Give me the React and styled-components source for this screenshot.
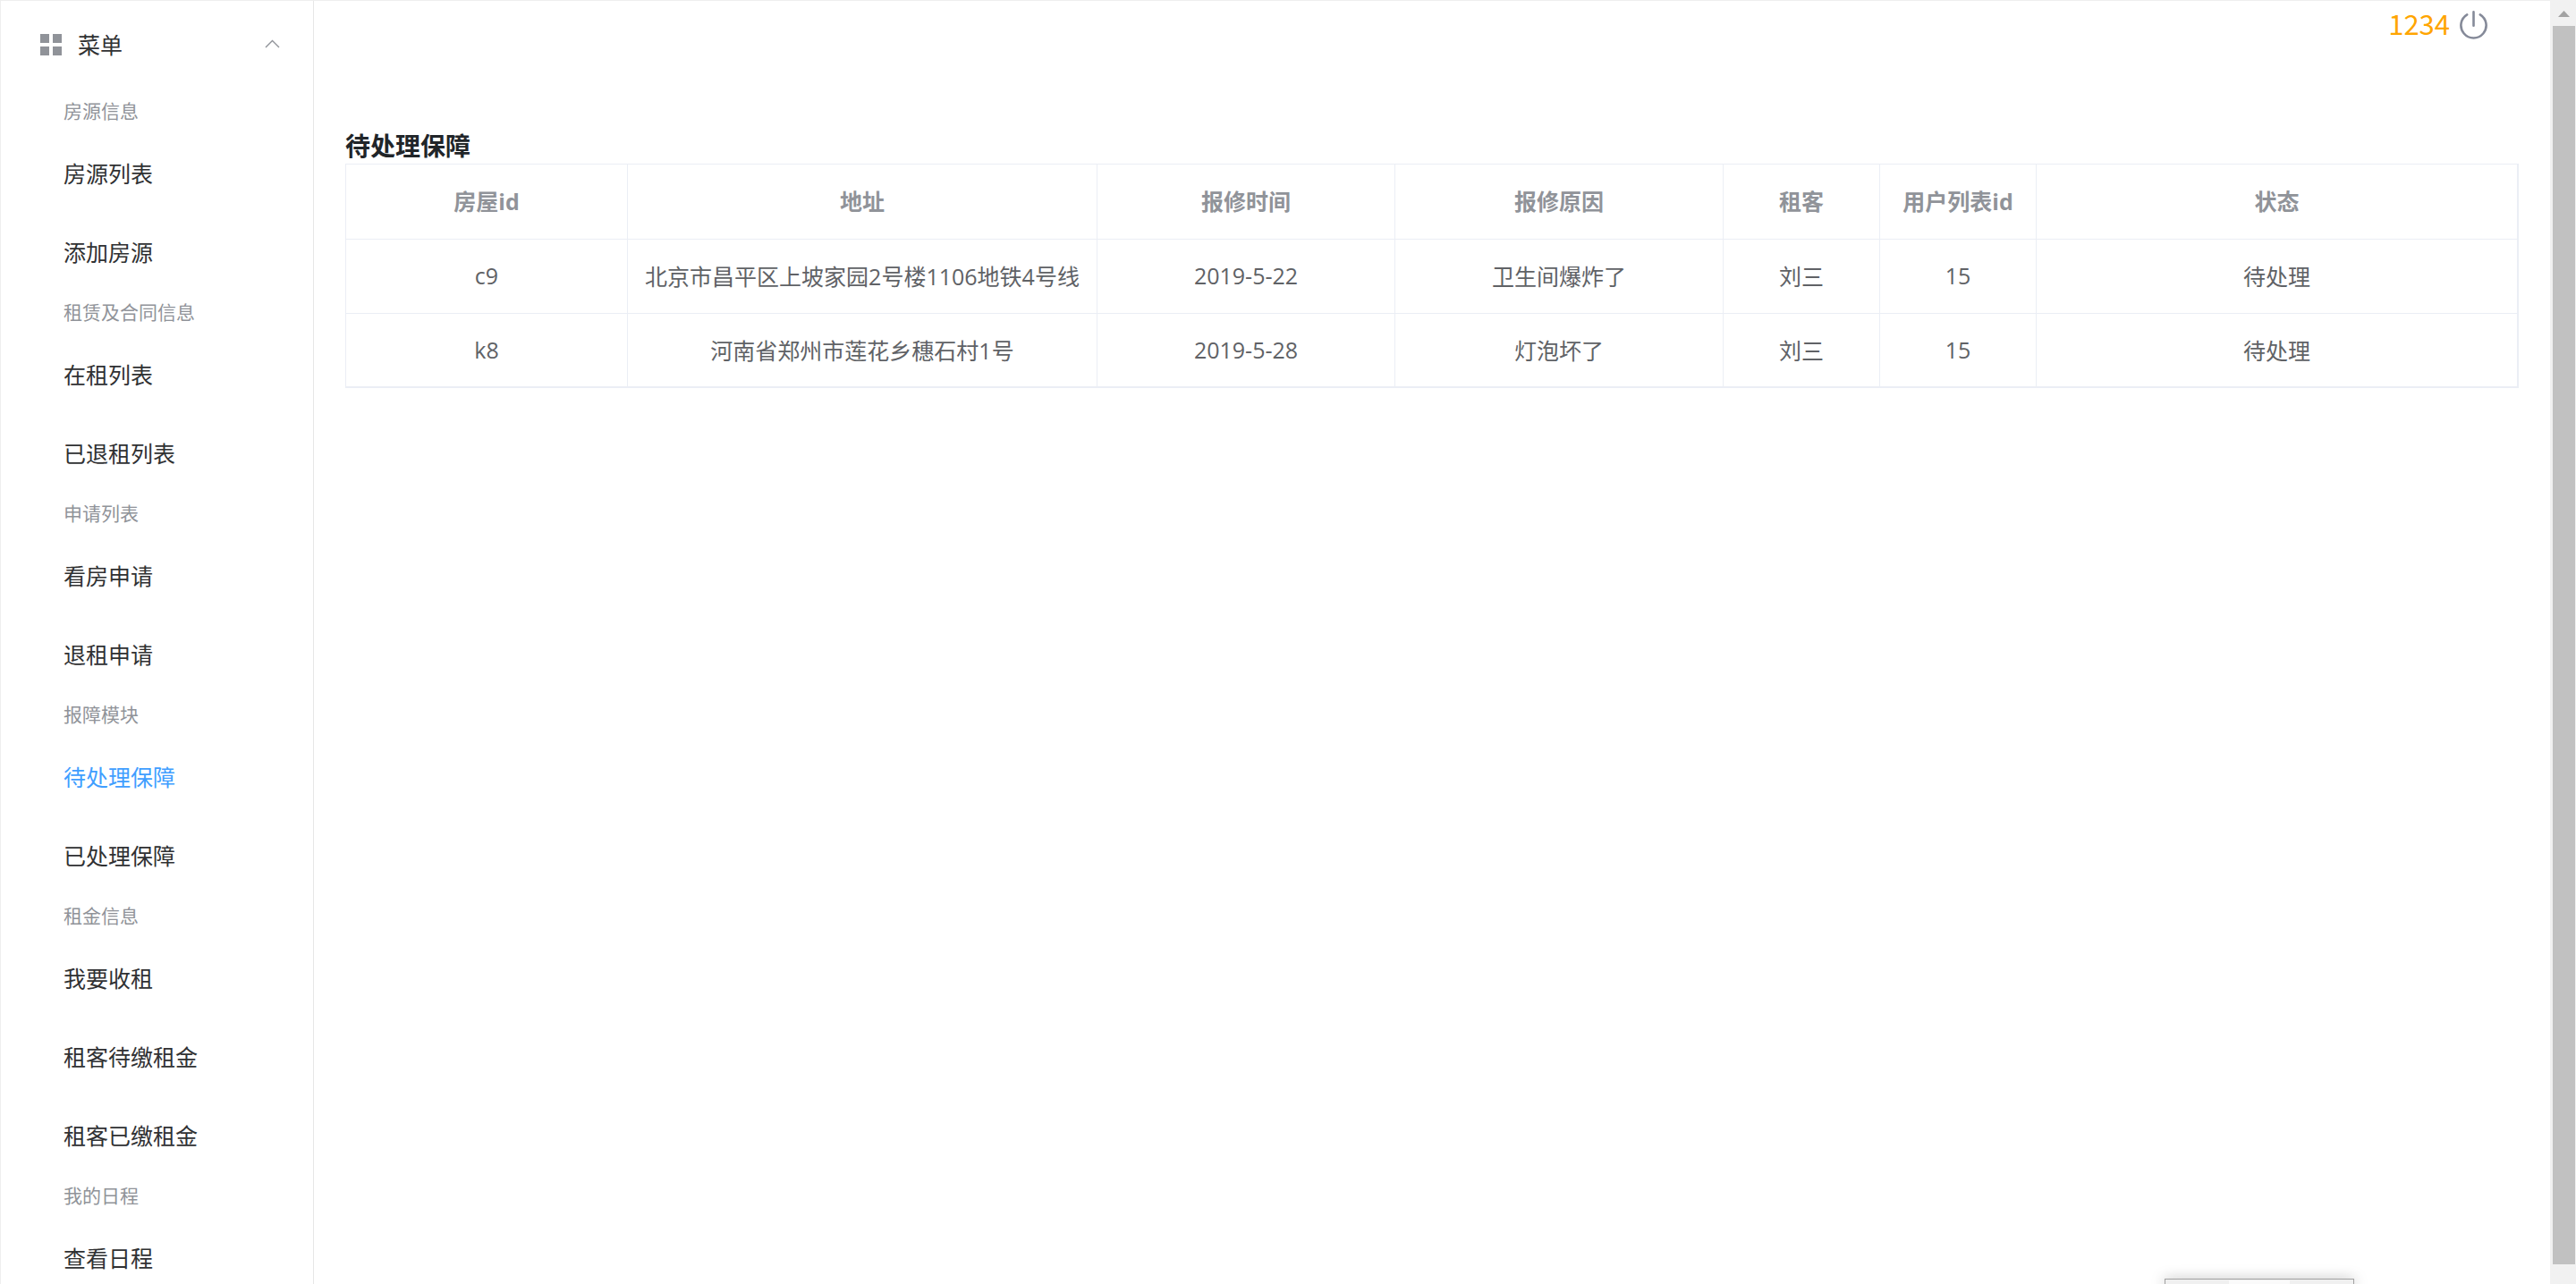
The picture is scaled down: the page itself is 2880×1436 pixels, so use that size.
import React, { useState } from "react";
import styled, { createGlobalStyle } from "styled-components";

const GlobalStyle = createGlobalStyle`
  * {
    box-sizing: border-box;
  }

  body {
    margin: 0;
    overflow: hidden;
    background: #fff;
    font-family: "Open Sans", "Noto Sans CJK SC", sans-serif;
    color: #212529;
  }
`;

const Page = styled.div`
  display: flex;
  height: 100vh;
  overflow: hidden;
`;

const Container = styled.div`
  display: flex;
  flex: 1;
  min-width: 0;
  border-top: 1px solid #eee;
  border-left: 1px solid #eee;
`;

const Aside = styled.nav`
  flex: none;
  width: 350px;
  border-right: 1px solid #e6e6e6;
`;

const SubMenuTitle = styled.button`
  display: flex;
  align-items: center;
  width: 100%;
  height: 100px;
  padding: 0 35px 4px;
  border: 0;
  background: none;
  color: #303133;
  font-family: inherit;
  font-size: 25px;
  cursor: pointer;
`;

const MenuIcon = styled.svg`
  width: 42px;
  height: 26px;
  margin-right: 9px;
  fill: #909399;
`;

const ArrowIcon = styled.svg`
  width: 21px;
  height: 21px;
  margin-left: auto;
  fill: none;
  stroke: #909399;
  stroke-width: 1.4;
  transform: ${(props) => (props.$open ? "none" : "rotate(180deg)")};
`;

const GroupTitle = styled.h2`
  height: 49px;
  margin: 0;
  padding-left: 70px;
  color: #909399;
  font-size: 21px;
  font-weight: 400;
  line-height: 46px;
`;

const MenuList = styled.ul`
  margin: 0;
  padding: 0;
  list-style: none;
`;

const MenuLink = styled.a`
  display: block;
  height: 88px;
  padding-left: 70px;
  color: ${(props) => (props.$active ? "#409eff" : "#303133")};
  font-size: 25px;
  line-height: 88px;
  text-decoration: none;
`;

const Content = styled.div`
  flex: 1;
  min-width: 0;
`;

const Header = styled.header`
  display: flex;
  justify-content: flex-end;
  align-items: flex-start;
  gap: 10px;
  height: 107px;
  padding: 0 70px;
`;

const UserName = styled.span`
  color: orange;
  font-family: "Noto Sans CJK SC", sans-serif;
  font-size: 31px;
  line-height: 50px;
`;

const LogoutButton = styled.button`
  display: flex;
  padding: 10px 0;
  border: 0;
  background: none;
  cursor: pointer;
`;

const Main = styled.main`
  padding: 35px;
`;

const Title = styled.h1`
  margin: 0;
  font-size: 28px;
  font-weight: 700;
  line-height: 40px;
`;

const Table = styled.table`
  width: 100%;
  table-layout: fixed;
  border-spacing: 0;
  border: 1px solid #ebeef5;
  border-right-width: 2px;
  border-bottom: 0;
  font-size: 25px;
  text-align: center;
`;

const HeadCell = styled.th`
  height: 84px;
  padding: 0 0 3px;
  border-right: 1px solid #ebeef5;
  border-bottom: 1px solid #ebeef5;
  color: #909399;
  font-weight: 700;

  &:last-child {
    border-right: 0;
  }
`;

const Cell = styled.td`
  height: 83px;
  padding: 0 0 2px;
  border-right: 1px solid #ebeef5;
  border-bottom: 1px solid #ebeef5;
  color: #606266;
  white-space: nowrap;

  &:last-child {
    border-right: 0;
  }

  tr:last-child > & {
    border-bottom-width: 2px;
  }
`;

const Scrollbar = styled.div`
  display: flex;
  flex: none;
  flex-direction: column;
  width: 29px;
  padding: 0 1px 22px 3px;
  background: #f1f1f1;
`;

const ScrollUp = styled.svg`
  flex: none;
  width: 25px;
  height: 29px;
  fill: #a3a3a3;
`;

const ScrollThumb = styled.div`
  flex: 1;
  background: #c1c1c1;
`;

/* top edge of the floating panel peeking in from below */
const Popup = styled.div`
  position: fixed;
  right: 248px;
  bottom: 0;
  display: flex;
  justify-content: center;
  width: 212px;
  height: 6px;
  padding-top: 1px;
  border: 1px solid #a0a0a0;
  border-bottom: 0;
  background: #f0f0f0;
  box-shadow: 0 2px 16px rgba(0, 0, 0, 0.4);
`;

const PopupTab = styled.div`
  width: 68px;
  background: #fafafa;
`;

const menuGroups = [
  { title: "房源信息", items: ["房源列表", "添加房源"] },
  { title: "租赁及合同信息", items: ["在租列表", "已退租列表"] },
  { title: "申请列表", items: ["看房申请", "退租申请"] },
  { title: "报障模块", items: ["待处理保障", "已处理保障"] },
  { title: "租金信息", items: ["我要收租", "租客待缴租金", "租客已缴租金"] },
  { title: "我的日程", items: ["查看日程"] },
];

const columns = [
  { label: "房屋id", prop: "houseId", width: 315 },
  { label: "地址", prop: "address", width: 525 },
  { label: "报修时间", prop: "date", width: 333 },
  { label: "报修原因", prop: "reason", width: 367 },
  { label: "租客", prop: "name", width: 175 },
  { label: "用户列表id", prop: "userListId", width: 175 },
  { label: "状态", prop: "status" },
];

const rows = [
  {
    houseId: "c9",
    address: "北京市昌平区上坡家园2号楼1106地铁4号线",
    date: "2019-5-22",
    reason: "卫生间爆炸了",
    name: "刘三",
    userListId: "15",
    status: "待处理",
  },
  {
    houseId: "k8",
    address: "河南省郑州市莲花乡穗石村1号",
    date: "2019-5-28",
    reason: "灯泡坏了",
    name: "刘三",
    userListId: "15",
    status: "待处理",
  },
];

const SideMenu = ({ active, onSelect }) => {
  const [open, setOpen] = useState(true);
  return (
    <Aside>
      <SubMenuTitle type="button" onClick={() => setOpen(!open)}>
        <MenuIcon viewBox="0 0 42 26">
          <path d="M9 2h10v10H9zM23 2h10v10H23zM9 16h10v10H9zM23 16h10v10H23z" />
        </MenuIcon>
        菜单
        <ArrowIcon viewBox="0 0 21 21" $open={open}>
          <path d="M3 14l7.5-7.5L18 14" />
        </ArrowIcon>
      </SubMenuTitle>
      {open &&
        menuGroups.map((group) => (
          <section key={group.title}>
            <GroupTitle>{group.title}</GroupTitle>
            <MenuList>
              {group.items.map((item) => (
                <li key={item}>
                  <MenuLink
                    href="#"
                    $active={item === active}
                    onClick={() => onSelect(item)}
                  >
                    {item}
                  </MenuLink>
                </li>
              ))}
            </MenuList>
          </section>
        ))}
    </Aside>
  );
};

const RepairTable = () => (
  <Table>
    <colgroup>
      {columns.map((col) => (
        <col key={col.prop} width={col.width} />
      ))}
    </colgroup>
    <thead>
      <tr>
        {columns.map((col) => (
          <HeadCell key={col.prop} scope="col">
            {col.label}
          </HeadCell>
        ))}
      </tr>
    </thead>
    <tbody>
      {rows.map((row) => (
        <tr key={row.houseId}>
          {columns.map((col) => (
            <Cell key={col.prop}>{row[col.prop]}</Cell>
          ))}
        </tr>
      ))}
    </tbody>
  </Table>
);

const App = () => {
  const [active, setActive] = useState("待处理保障");
  return (
    <>
      <GlobalStyle />
      <Page>
        <Container>
          <SideMenu active={active} onSelect={setActive} />
          <Content>
            <Header>
              <UserName>1234</UserName>
              <LogoutButton type="button" aria-label="退出">
                <svg
                  width="32"
                  height="34"
                  viewBox="0 0 32 34"
                  fill="none"
                  stroke="#858a99"
                  strokeWidth="2.6"
                  strokeLinecap="round"
                >
                  <path d="M16.5 2.4v15.4M9.2 5.3a14.1 14.1 0 1 0 14.6 0" />
                </svg>
              </LogoutButton>
            </Header>
            <Main>
              <Title>待处理保障</Title>
              <RepairTable />
            </Main>
          </Content>
        </Container>
        <Scrollbar>
          <ScrollUp viewBox="0 0 25 29">
            <path d="M6 19l6.5-7 6.5 7z" />
          </ScrollUp>
          <ScrollThumb />
        </Scrollbar>
      </Page>
      <Popup>
        <PopupTab />
      </Popup>
    </>
  );
};

export default App;
